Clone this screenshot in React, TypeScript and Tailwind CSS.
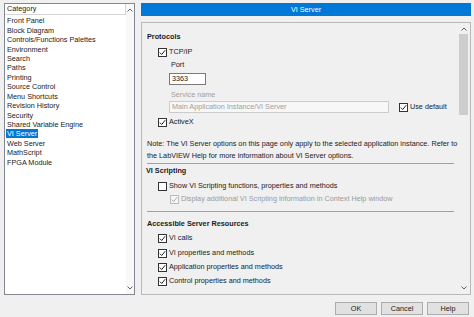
import React from 'react';

const categories = [
  'Front Panel',
  'Block Diagram',
  'Controls/Functions Palettes',
  'Environment',
  'Search',
  'Paths',
  'Printing',
  'Source Control',
  'Menu Shortcuts',
  'Revision History',
  'Security',
  'Shared Variable Engine',
  'VI Server',
  'Web Server',
  'MathScript',
  'FPGA Module',
];

function CheckBox({ checked, disabled }: { checked: boolean; disabled?: boolean }) {
  return (
    <span
      className={`w-[9px] h-[9px] shrink-0 border flex items-center justify-center ${
        disabled ? 'border-[#bcbcbc] bg-[#f7f7f7]' : 'border-[#333333] bg-white'
      }`}
    >
      {checked && (
        <svg width="7" height="7" viewBox="0 0 7 7">
          <path
            d="M0.8 3.6 L2.7 5.5 L6.2 1.2"
            fill="none"
            stroke={disabled ? '#a8a8a8' : '#222'}
            strokeWidth="1"
          />
        </svg>
      )}
    </span>
  );
}

function CheckRow({
  label,
  checked,
  disabled,
  className = '',
}: {
  label: string;
  checked: boolean;
  disabled?: boolean;
  className?: string;
}) {
  return (
    <div className={`flex items-center gap-[2px] h-[12px] ${className}`}>
      <CheckBox checked={checked} disabled={disabled} />
      <span className={disabled ? 'text-[#9a9a9a]' : 'text-[#1a1a1a]'}>{label}</span>
    </div>
  );
}

function Arrow({ up }: { up?: boolean }) {
  return (
    <svg width="6" height="4" viewBox="0 0 6 4">
      <path
        d={up ? 'M0.5 3.5 L3 1 L5.5 3.5' : 'M0.5 0.5 L3 3 L5.5 0.5'}
        fill="none"
        stroke="#606060"
        strokeWidth="1"
      />
    </svg>
  );
}

function Separator({ className = '' }: { className?: string }) {
  return <div className={`h-px bg-[#a0a0a0] mr-[4px] ${className}`} />;
}

export default function App() {
  return (
    <div
      className="w-[474px] h-[317px] bg-[#f0f0f0] text-[7.25px] leading-[10px] text-[#1a1a1a] overflow-hidden flex flex-col"
      style={{ fontFamily: '"Liberation Sans", Arial, sans-serif' }}
    >
      <div className="flex pt-[3px] pl-[4px] gap-[6px]">
        {/* Category list */}
        <div className="w-[131px] h-[292px] border border-[#828790] bg-white flex">
          <div className="flex-1 flex flex-col">
            <div className="h-[11px] border-b border-r border-[#d5d5d5] pl-[2px] flex items-center text-[#222]">
              Category
            </div>
            <div className="flex flex-col pt-[1px]">
              {categories.map((c) => (
                <div key={c} className="h-[9.45px] leading-[9px] flex items-center pl-[2px]">
                  <span
                    className={
                      c === 'VI Server'
                        ? 'bg-[#0078d7] text-white px-[1px] -ml-[1px] leading-[9px]'
                        : 'leading-[9px]'
                    }
                  >
                    {c}
                  </span>
                </div>
              ))}
            </div>
          </div>
          <div className="w-[8px] flex flex-col items-center justify-between py-[4px] bg-[#f8f8f8]">
            <Arrow up />
            <Arrow />
          </div>
        </div>

        {/* Right side */}
        <div className="w-[330px] flex flex-col">
          <div className="h-[13px] bg-[#0078d7] text-white flex items-center justify-center">VI Server</div>
          <div className="mt-[6px] h-[273px] border border-[#b9b9b9] flex">
            <div className="flex-1 pl-[5px] flex flex-col">
              <div className="font-bold mt-[9px] h-[10px]">Protocols</div>
              <CheckRow label="TCP/IP" checked className="ml-[11px] mt-[4px]" />
              <div className="ml-[24px] mt-[2px] h-[10px]">Port</div>
              <div className="ml-[22px] mt-[3px] w-[37px] h-[12px] border border-[#7a7a7a] bg-white pl-[2px] flex items-center">
                3363
              </div>
              <div className="ml-[24px] mt-[5px] h-[10px] text-[#a0a0a0]">Service name</div>
              <div className="flex items-center mt-[1px]">
                <div className="ml-[22px] w-[220px] h-[12px] border border-[#cccccc] bg-[#f7f7f7] text-[#a0a0a0] pl-[2px] flex items-center">
                  Main Application Instance/VI Server
                </div>
                <CheckRow label="Use default" checked className="ml-[10px]" />
              </div>
              <CheckRow label="ActiveX" checked className="ml-[11px] mt-[3px]" />
              <div className="mt-[10px] leading-[12px]">
                Note: The VI Server options on this page only apply to the selected application instance. Refer to
                the LabVIEW Help for more information about VI Server options.
              </div>
              <Separator className="mt-[1px]" />
              <div className="font-bold mt-[2px] h-[10px] -ml-[1px]">VI Scripting</div>
              <CheckRow
                label="Show VI Scripting functions, properties and methods"
                checked={false}
                className="ml-[11px] mt-[4px]"
              />
              <CheckRow
                label="Display additional VI Scripting information in Context Help window"
                checked
                disabled
                className="ml-[23px] mt-[1px]"
              />
              <Separator className="mt-[6px]" />
              <div className="font-bold mt-[7px] h-[10px]">Accessible Server Resources</div>
              <CheckRow label="VI calls" checked className="ml-[11px] mt-[3px]" />
              <CheckRow label="VI properties and methods" checked className="ml-[11px] mt-[3px]" />
              <CheckRow label="Application properties and methods" checked className="ml-[11px] mt-[2px]" />
              <CheckRow label="Control properties and methods" checked className="ml-[11px] mt-[2px]" />
            </div>
            <div className="w-[11px] flex flex-col items-center py-[4px] mr-[1px]">
              <Arrow up />
              <div className="mt-[3px] w-[9px] h-[81px] bg-[#cdcdcd]" />
              <div className="flex-1" />
              <Arrow />
            </div>
          </div>
        </div>
      </div>

      {/* Buttons */}
      <div className="flex justify-end gap-[4px] pr-[5px] mt-[7px]">
        {['OK', 'Cancel', 'Help'].map((b) => (
          <div
            key={b}
            className="w-[42px] h-[13px] border border-[#adadad] bg-[#e1e1e1] flex items-center justify-center"
          >
            {b}
          </div>
        ))}
      </div>
    </div>
  );
}
